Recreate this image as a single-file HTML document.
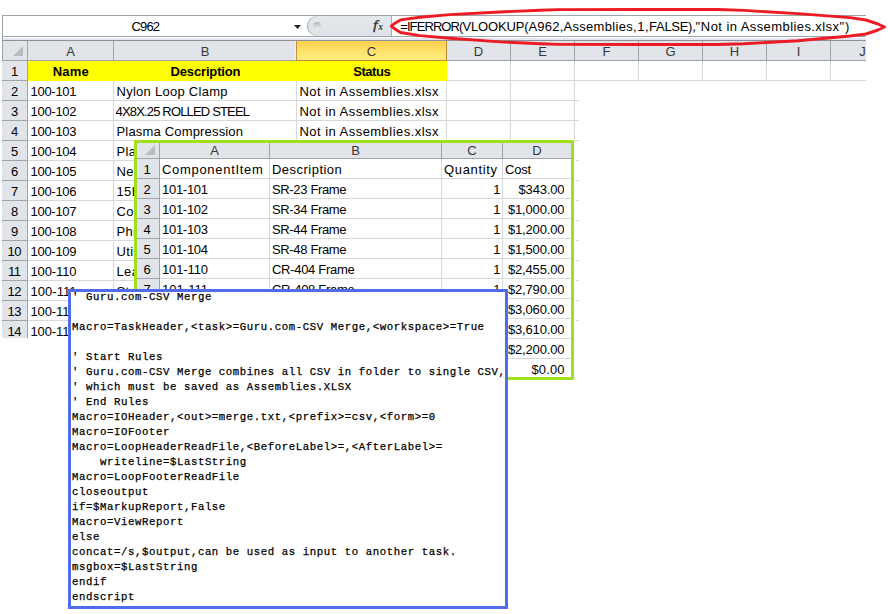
<!DOCTYPE html>
<html><head><meta charset="utf-8"><title>Excel VLOOKUP Assemblies</title>
<style>
html,body{margin:0;padding:0;background:#fff;}
body{width:888px;height:614px;position:relative;overflow:hidden;font-family:"Liberation Sans",sans-serif;font-size:13px;color:#000;}
body>div,body>svg,body>pre{position:absolute;}
.t{white-space:nowrap;overflow:hidden;}
.c{text-align:center;}
.r{text-align:right;}
.b{font-weight:bold;}
.h{color:#383838;}
.f{overflow:visible;font-size:0;}
.f span{display:inline-block;font-size:13px;white-space:pre;vertical-align:top;}
.fx{font-family:"Liberation Serif",serif;font-style:italic;font-weight:bold;font-size:14px;color:#333;}
.fx b{display:inline-block;font-weight:normal;font-size:13.5px;-webkit-text-stroke:0.3px #333;transform:scaleX(1.2);transform-origin:0 50%;margin-right:1.5px;}
.fx span{font-size:9.5px;position:relative;top:0.5px;}
.code{margin:0;font-family:"Liberation Mono",monospace;font-size:10.7px;letter-spacing:0.58px;line-height:15px;color:#000;-webkit-text-stroke:0.25px #000;}
</style></head><body>
<div style="left:2px;top:15px;width:864px;height:1px;background:#9fa4aa;"></div>
<div style="left:2px;top:15px;width:1px;height:46px;background:#9fa4aa;"></div>
<div style="left:2px;top:36px;width:864px;height:1px;background:#9fa4aa;"></div>
<div style="left:3px;top:37px;width:863px;height:1px;background:#ffffff;"></div>
<div style="left:3px;top:38px;width:863px;height:2px;background:#e3e8f4;"></div>
<div style="left:2px;top:40px;width:864px;height:1px;background:#8e9298;"></div>
<div class="t c" style="left:2px;top:17px;width:286.67px;height:20px;line-height:20px;letter-spacing:-0.826px;">C962</div>
<svg style="left:294px;top:25px" width="8" height="5" viewBox="0 0 8 5"><path d="M0 0H7L3.5 4Z" fill="#222"/></svg>
<div style="left:307px;top:16px;width:84px;height:20px;background:linear-gradient(#e4e7eb,#dfe2e7);border-radius:10px 0 0 10px;box-shadow:inset 1px 0 0 #a9adb3;"></div>
<div style="left:391px;top:16px;width:1px;height:20px;background:#a9adb3;"></div>
<div style="left:312.5px;top:21.5px;width:8.5px;height:8.5px;border-radius:50%;background:linear-gradient(#b3b6bb,#d6d8db 55%,#f0f1f2);"></div>
<div class="t fx" style="left:373px;top:15px;width:18px;height:20px;line-height:20px;"><b>f</b><span>x</span></div>
<div class="t f" style="left:400.2px;top:17px;width:470px;height:20px;line-height:20px;"><span style="width:62.3px;letter-spacing:-0.902px;">=IFERROR(</span><span style="width:66.0px;letter-spacing:-0.148px;">VLOOKUP(</span><span style="width:35.0px;letter-spacing:0.203px;">A962,</span><span style="width:69.5px;letter-spacing:0.303px;">Assemblies</span><span style="width:16.1px;letter-spacing:0.544px;">,1,</span><span style="width:46.4px;letter-spacing:-0.289px;">FALSE),</span><span style="width:5.4px;letter-spacing:0.775px;">"</span><span style="width:138.6px;letter-spacing:0.421px;">Not in Assemblies.xlsx</span><span style="width:11.0px;letter-spacing:1.023px;">")</span></div>
<div style="left:3px;top:41px;width:863px;height:19px;background:#e1e4e9;"></div>
<div style="left:2px;top:60px;width:864px;height:1px;background:#9fa4aa;"></div>
<div style="left:296px;top:41px;width:151px;height:20px;background:#c48d33;"></div>
<div style="left:297px;top:41px;width:149px;height:19px;background:linear-gradient(#fccf50,#ffe36c 55%,#ffee80);"></div>
<div style="left:295px;top:41px;width:1px;height:19px;background:#eef0f3;"></div>
<div style="left:27px;top:41px;width:1px;height:297px;background:#9fa4aa;"></div>
<div style="left:113px;top:41px;width:1px;height:19px;background:#9fa4aa;"></div>
<div class="t c h" style="left:28px;top:42px;width:85.00px;height:19px;line-height:19px;">A</div>
<div class="t c h" style="left:114px;top:42px;width:182.00px;height:19px;line-height:19px;">B</div>
<div class="t c h" style="left:297px;top:42px;width:149.00px;height:19px;line-height:19px;">C</div>
<div style="left:510px;top:41px;width:1px;height:19px;background:#9fa4aa;"></div>
<div class="t c h" style="left:447px;top:42px;width:63.00px;height:19px;line-height:19px;">D</div>
<div style="left:574px;top:41px;width:1px;height:19px;background:#9fa4aa;"></div>
<div class="t c h" style="left:511px;top:42px;width:63.00px;height:19px;line-height:19px;">E</div>
<div style="left:638px;top:41px;width:1px;height:19px;background:#9fa4aa;"></div>
<div class="t c h" style="left:575px;top:42px;width:63.00px;height:19px;line-height:19px;">F</div>
<div style="left:702px;top:41px;width:1px;height:19px;background:#9fa4aa;"></div>
<div class="t c h" style="left:639px;top:42px;width:63.00px;height:19px;line-height:19px;">G</div>
<div style="left:766px;top:41px;width:1px;height:19px;background:#9fa4aa;"></div>
<div class="t c h" style="left:703px;top:42px;width:63.00px;height:19px;line-height:19px;">H</div>
<div style="left:830px;top:41px;width:1px;height:19px;background:#9fa4aa;"></div>
<div class="t c h" style="left:767px;top:42px;width:63.00px;height:19px;line-height:19px;">I</div>
<div class="t c h" style="left:831px;top:42px;width:63.00px;height:19px;line-height:19px;">J</div>
<svg style="left:12px;top:45px" width="12" height="12" viewBox="0 0 12 12"><path d="M11 1V11H1Z" fill="#b9bdc2"/></svg>
<div style="left:2px;top:61px;width:25px;height:277px;background:#e1e4e9;"></div>
<div style="left:2px;top:80px;width:25px;height:1px;background:#9fa4aa;"></div>
<div class="t c" style="left:2px;top:62px;width:24.70px;height:19px;line-height:19px;letter-spacing:-0.3px;">1</div>
<div style="left:2px;top:100px;width:25px;height:1px;background:#9fa4aa;"></div>
<div class="t c" style="left:2px;top:82px;width:24.70px;height:19px;line-height:19px;letter-spacing:-0.3px;">2</div>
<div style="left:2px;top:120px;width:25px;height:1px;background:#9fa4aa;"></div>
<div class="t c" style="left:2px;top:102px;width:24.70px;height:19px;line-height:19px;letter-spacing:-0.3px;">3</div>
<div style="left:2px;top:140px;width:25px;height:1px;background:#9fa4aa;"></div>
<div class="t c" style="left:2px;top:122px;width:24.70px;height:19px;line-height:19px;letter-spacing:-0.3px;">4</div>
<div style="left:2px;top:160px;width:25px;height:1px;background:#9fa4aa;"></div>
<div class="t c" style="left:2px;top:142px;width:24.70px;height:19px;line-height:19px;letter-spacing:-0.3px;">5</div>
<div style="left:2px;top:180px;width:25px;height:1px;background:#9fa4aa;"></div>
<div class="t c" style="left:2px;top:162px;width:24.70px;height:19px;line-height:19px;letter-spacing:-0.3px;">6</div>
<div style="left:2px;top:200px;width:25px;height:1px;background:#9fa4aa;"></div>
<div class="t c" style="left:2px;top:182px;width:24.70px;height:19px;line-height:19px;letter-spacing:-0.3px;">7</div>
<div style="left:2px;top:220px;width:25px;height:1px;background:#9fa4aa;"></div>
<div class="t c" style="left:2px;top:202px;width:24.70px;height:19px;line-height:19px;letter-spacing:-0.3px;">8</div>
<div style="left:2px;top:240px;width:25px;height:1px;background:#9fa4aa;"></div>
<div class="t c" style="left:2px;top:222px;width:24.70px;height:19px;line-height:19px;letter-spacing:-0.3px;">9</div>
<div style="left:2px;top:260px;width:25px;height:1px;background:#9fa4aa;"></div>
<div class="t c" style="left:2px;top:242px;width:24.70px;height:19px;line-height:19px;letter-spacing:-0.3px;">10</div>
<div style="left:2px;top:280px;width:25px;height:1px;background:#9fa4aa;"></div>
<div class="t c" style="left:2px;top:262px;width:24.70px;height:19px;line-height:19px;letter-spacing:-0.3px;">11</div>
<div style="left:2px;top:300px;width:25px;height:1px;background:#9fa4aa;"></div>
<div class="t c" style="left:2px;top:282px;width:24.70px;height:19px;line-height:19px;letter-spacing:-0.3px;">12</div>
<div style="left:2px;top:320px;width:25px;height:1px;background:#9fa4aa;"></div>
<div class="t c" style="left:2px;top:302px;width:24.70px;height:19px;line-height:19px;letter-spacing:-0.3px;">13</div>
<div class="t c" style="left:2px;top:322px;width:24.70px;height:19px;line-height:19px;letter-spacing:-0.3px;">14</div>
<div style="left:28px;top:61px;width:419px;height:20px;background:#ffff00;"></div>
<div style="left:447px;top:80px;width:419px;height:1px;background:#d6d8da;"></div>
<div style="left:510px;top:61px;width:1px;height:20px;background:#d6d8da;"></div>
<div style="left:574px;top:61px;width:1px;height:20px;background:#d6d8da;"></div>
<div style="left:638px;top:61px;width:1px;height:20px;background:#d6d8da;"></div>
<div style="left:702px;top:61px;width:1px;height:20px;background:#d6d8da;"></div>
<div style="left:766px;top:61px;width:1px;height:20px;background:#d6d8da;"></div>
<div style="left:830px;top:61px;width:1px;height:20px;background:#d6d8da;"></div>
<div style="left:28px;top:100px;width:551px;height:1px;background:#d6d8da;"></div>
<div style="left:28px;top:120px;width:551px;height:1px;background:#d6d8da;"></div>
<div style="left:28px;top:140px;width:551px;height:1px;background:#d6d8da;"></div>
<div style="left:28px;top:160px;width:551px;height:1px;background:#d6d8da;"></div>
<div style="left:28px;top:180px;width:551px;height:1px;background:#d6d8da;"></div>
<div style="left:28px;top:200px;width:551px;height:1px;background:#d6d8da;"></div>
<div style="left:28px;top:220px;width:551px;height:1px;background:#d6d8da;"></div>
<div style="left:28px;top:240px;width:551px;height:1px;background:#d6d8da;"></div>
<div style="left:28px;top:260px;width:551px;height:1px;background:#d6d8da;"></div>
<div style="left:28px;top:280px;width:551px;height:1px;background:#d6d8da;"></div>
<div style="left:28px;top:300px;width:551px;height:1px;background:#d6d8da;"></div>
<div style="left:28px;top:320px;width:551px;height:1px;background:#d6d8da;"></div>
<div style="left:113px;top:81px;width:1px;height:257px;background:#d6d8da;"></div>
<div style="left:296px;top:81px;width:1px;height:257px;background:#d6d8da;"></div>
<div style="left:446px;top:81px;width:1px;height:257px;background:#d6d8da;"></div>
<div style="left:510px;top:81px;width:1px;height:257px;background:#d6d8da;"></div>
<div style="left:574px;top:81px;width:1px;height:257px;background:#d6d8da;"></div>
<div class="t c b" style="left:28px;top:62px;width:85.63px;height:20px;line-height:20px;letter-spacing:0.126px;">Name</div>
<div class="t c b" style="left:114px;top:62px;width:182.85px;height:20px;line-height:20px;letter-spacing:-0.152px;">Description</div>
<div class="t c b" style="left:297px;top:62px;width:149.53px;height:20px;line-height:20px;letter-spacing:-0.467px;">Status</div>
<div class="t " style="left:30.5px;top:82px;width:82.00px;height:20px;line-height:20px;letter-spacing:-0.286px;">100-101</div>
<div class="t " style="left:116.5px;top:82px;width:179.00px;height:20px;line-height:20px;letter-spacing:0.27px;">Nylon Loop Clamp</div>
<div class="t " style="left:299.5px;top:82px;width:146.00px;height:20px;line-height:20px;letter-spacing:0.461px;">Not in Assemblies.xlsx</div>
<div class="t " style="left:30.5px;top:102px;width:82.00px;height:20px;line-height:20px;letter-spacing:-0.286px;">100-102</div>
<div class="t " style="left:115.5px;top:102px;width:179.00px;height:20px;line-height:20px;letter-spacing:-0.832px;">4X8X.25 ROLLED STEEL</div>
<div class="t " style="left:299.5px;top:102px;width:146.00px;height:20px;line-height:20px;letter-spacing:0.461px;">Not in Assemblies.xlsx</div>
<div class="t " style="left:30.5px;top:122px;width:82.00px;height:20px;line-height:20px;letter-spacing:-0.286px;">100-103</div>
<div class="t " style="left:116.5px;top:122px;width:179.00px;height:20px;line-height:20px;letter-spacing:0.174px;">Plasma Compression</div>
<div class="t " style="left:299.5px;top:122px;width:146.00px;height:20px;line-height:20px;letter-spacing:0.461px;">Not in Assemblies.xlsx</div>
<div class="t " style="left:30.5px;top:142px;width:82.00px;height:20px;line-height:20px;letter-spacing:-0.286px;">100-104</div>
<div class="t " style="left:116.5px;top:142px;width:179.00px;height:20px;line-height:20px;letter-spacing:0.35px;">Plasma Cutter</div>
<div class="t " style="left:30.5px;top:162px;width:82.00px;height:20px;line-height:20px;letter-spacing:-0.286px;">100-105</div>
<div class="t " style="left:116.5px;top:162px;width:179.00px;height:20px;line-height:20px;letter-spacing:0.35px;">Neoprene Gasket</div>
<div class="t " style="left:30.5px;top:182px;width:82.00px;height:20px;line-height:20px;letter-spacing:-0.286px;">100-106</div>
<div class="t " style="left:116.5px;top:182px;width:179.00px;height:20px;line-height:20px;letter-spacing:0.35px;">15HP Motor</div>
<div class="t " style="left:30.5px;top:202px;width:82.00px;height:20px;line-height:20px;letter-spacing:-0.286px;">100-107</div>
<div class="t " style="left:116.5px;top:202px;width:179.00px;height:20px;line-height:20px;letter-spacing:0.35px;">Cooling Fan</div>
<div class="t " style="left:30.5px;top:222px;width:82.00px;height:20px;line-height:20px;letter-spacing:-0.286px;">100-108</div>
<div class="t " style="left:116.5px;top:222px;width:179.00px;height:20px;line-height:20px;letter-spacing:0.35px;">Phillips Screw</div>
<div class="t " style="left:30.5px;top:242px;width:82.00px;height:20px;line-height:20px;letter-spacing:-0.286px;">100-109</div>
<div class="t " style="left:116.5px;top:242px;width:179.00px;height:20px;line-height:20px;letter-spacing:0.35px;">Utility Box</div>
<div class="t " style="left:30.5px;top:262px;width:82.00px;height:20px;line-height:20px;letter-spacing:-0.125px;">100-110</div>
<div class="t " style="left:116.5px;top:262px;width:179.00px;height:20px;line-height:20px;letter-spacing:0.35px;">Lead Wire</div>
<div class="t " style="left:30.5px;top:282px;width:82.00px;height:20px;line-height:20px;letter-spacing:0.036px;">100-111</div>
<div class="t " style="left:116.5px;top:282px;width:179.00px;height:20px;line-height:20px;letter-spacing:0.35px;">Stainless Bolt</div>
<div class="t " style="left:30.5px;top:302px;width:82.00px;height:20px;line-height:20px;letter-spacing:-0.125px;">100-112</div>
<div class="t " style="left:116.5px;top:302px;width:179.00px;height:20px;line-height:20px;letter-spacing:0.35px;">Steel Plate</div>
<div class="t " style="left:30.5px;top:322px;width:82.00px;height:20px;line-height:20px;letter-spacing:-0.125px;">100-113</div>
<div class="t " style="left:116.5px;top:322px;width:179.00px;height:20px;line-height:20px;letter-spacing:0.35px;">Steel Rod</div>
<div style="left:574px;top:140px;width:2px;height:198px;background:#ffffff;"></div>
<div style="left:0px;top:338px;width:600px;height:40px;background:#ffffff;"></div>
<div style="left:134px;top:140px;width:434px;height:234px;border:3px solid #a2e01c;background:#fff;"></div>
<div style="left:137px;top:143px;width:434px;height:15px;background:#e1e4e9;"></div>
<div style="left:137px;top:158px;width:434px;height:1px;background:#9fa4aa;"></div>
<div style="left:159px;top:143px;width:1px;height:234px;background:#9fa4aa;"></div>
<div style="left:269px;top:143px;width:1px;height:15px;background:#9fa4aa;"></div>
<div style="left:269px;top:159px;width:1px;height:218px;background:#d6d8da;"></div>
<div class="t c h" style="left:160px;top:141px;width:109.00px;height:19px;line-height:19px;">A</div>
<div style="left:441px;top:143px;width:1px;height:15px;background:#9fa4aa;"></div>
<div style="left:441px;top:159px;width:1px;height:218px;background:#d6d8da;"></div>
<div class="t c h" style="left:270px;top:141px;width:171.00px;height:19px;line-height:19px;">B</div>
<div style="left:502px;top:143px;width:1px;height:15px;background:#9fa4aa;"></div>
<div style="left:502px;top:159px;width:1px;height:218px;background:#d6d8da;"></div>
<div class="t c h" style="left:442px;top:141px;width:60.00px;height:19px;line-height:19px;">C</div>
<div class="t c h" style="left:503px;top:141px;width:68.00px;height:19px;line-height:19px;">D</div>
<svg style="left:144px;top:144px" width="12" height="12" viewBox="0 0 12 12"><path d="M11 1V11H1Z" fill="#b9bdc2"/></svg>
<div style="left:137px;top:159px;width:22px;height:218px;background:#e1e4e9;"></div>
<div style="left:137px;top:178px;width:22px;height:1px;background:#9fa4aa;"></div>
<div style="left:160px;top:178px;width:411px;height:1px;background:#d6d8da;"></div>
<div class="t c" style="left:136px;top:160px;width:21.70px;height:20px;line-height:20px;letter-spacing:-0.3px;">1</div>
<div class="t " style="left:162px;top:160px;width:106.00px;height:20px;line-height:20px;letter-spacing:0.692px;">ComponentItem</div>
<div class="t " style="left:272px;top:160px;width:168.00px;height:20px;line-height:20px;letter-spacing:0.477px;">Description</div>
<div class="t " style="left:444px;top:160px;width:58.00px;height:20px;line-height:20px;letter-spacing:0.654px;">Quantity</div>
<div class="t " style="left:505px;top:160px;width:64.00px;height:20px;line-height:20px;letter-spacing:-0.245px;">Cost</div>
<div style="left:137px;top:198px;width:22px;height:1px;background:#9fa4aa;"></div>
<div style="left:160px;top:198px;width:411px;height:1px;background:#d6d8da;"></div>
<div class="t c" style="left:136px;top:180px;width:21.70px;height:20px;line-height:20px;letter-spacing:-0.3px;">2</div>
<div class="t " style="left:162px;top:180px;width:106.00px;height:20px;line-height:20px;letter-spacing:-0.286px;">101-101</div>
<div class="t " style="left:272px;top:180px;width:168.00px;height:20px;line-height:20px;letter-spacing:-0.343px;">SR-23 Frame</div>
<div class="t r" style="left:442px;top:180px;width:58.50px;height:20px;line-height:20px;">1</div>
<div class="t r" style="left:503px;top:180px;width:61.33px;height:20px;line-height:20px;letter-spacing:-0.167px;">$343.00</div>
<div style="left:137px;top:218px;width:22px;height:1px;background:#9fa4aa;"></div>
<div style="left:160px;top:218px;width:411px;height:1px;background:#d6d8da;"></div>
<div class="t c" style="left:136px;top:200px;width:21.70px;height:20px;line-height:20px;letter-spacing:-0.3px;">3</div>
<div class="t " style="left:162px;top:200px;width:106.00px;height:20px;line-height:20px;letter-spacing:-0.286px;">101-102</div>
<div class="t " style="left:272px;top:200px;width:168.00px;height:20px;line-height:20px;letter-spacing:-0.343px;">SR-34 Frame</div>
<div class="t r" style="left:442px;top:200px;width:58.50px;height:20px;line-height:20px;">1</div>
<div class="t r" style="left:503px;top:200px;width:61.34px;height:20px;line-height:20px;letter-spacing:-0.155px;">$1,000.00</div>
<div style="left:137px;top:238px;width:22px;height:1px;background:#9fa4aa;"></div>
<div style="left:160px;top:238px;width:411px;height:1px;background:#d6d8da;"></div>
<div class="t c" style="left:136px;top:220px;width:21.70px;height:20px;line-height:20px;letter-spacing:-0.3px;">4</div>
<div class="t " style="left:162px;top:220px;width:106.00px;height:20px;line-height:20px;letter-spacing:-0.286px;">101-103</div>
<div class="t " style="left:272px;top:220px;width:168.00px;height:20px;line-height:20px;letter-spacing:-0.343px;">SR-44 Frame</div>
<div class="t r" style="left:442px;top:220px;width:58.50px;height:20px;line-height:20px;">1</div>
<div class="t r" style="left:503px;top:220px;width:61.34px;height:20px;line-height:20px;letter-spacing:-0.155px;">$1,200.00</div>
<div style="left:137px;top:258px;width:22px;height:1px;background:#9fa4aa;"></div>
<div style="left:160px;top:258px;width:411px;height:1px;background:#d6d8da;"></div>
<div class="t c" style="left:136px;top:240px;width:21.70px;height:20px;line-height:20px;letter-spacing:-0.3px;">5</div>
<div class="t " style="left:162px;top:240px;width:106.00px;height:20px;line-height:20px;letter-spacing:-0.286px;">101-104</div>
<div class="t " style="left:272px;top:240px;width:168.00px;height:20px;line-height:20px;letter-spacing:-0.343px;">SR-48 Frame</div>
<div class="t r" style="left:442px;top:240px;width:58.50px;height:20px;line-height:20px;">1</div>
<div class="t r" style="left:503px;top:240px;width:61.34px;height:20px;line-height:20px;letter-spacing:-0.155px;">$1,500.00</div>
<div style="left:137px;top:278px;width:22px;height:1px;background:#9fa4aa;"></div>
<div style="left:160px;top:278px;width:411px;height:1px;background:#d6d8da;"></div>
<div class="t c" style="left:136px;top:260px;width:21.70px;height:20px;line-height:20px;letter-spacing:-0.3px;">6</div>
<div class="t " style="left:162px;top:260px;width:106.00px;height:20px;line-height:20px;letter-spacing:-0.125px;">101-110</div>
<div class="t " style="left:272px;top:260px;width:168.00px;height:20px;line-height:20px;letter-spacing:-0.297px;">CR-404 Frame</div>
<div class="t r" style="left:442px;top:260px;width:58.50px;height:20px;line-height:20px;">1</div>
<div class="t r" style="left:503px;top:260px;width:61.34px;height:20px;line-height:20px;letter-spacing:-0.155px;">$2,455.00</div>
<div style="left:137px;top:298px;width:22px;height:1px;background:#9fa4aa;"></div>
<div style="left:160px;top:298px;width:411px;height:1px;background:#d6d8da;"></div>
<div class="t c" style="left:136px;top:280px;width:21.70px;height:20px;line-height:20px;letter-spacing:-0.3px;">7</div>
<div class="t " style="left:162px;top:280px;width:106.00px;height:20px;line-height:20px;letter-spacing:0.036px;">101-111</div>
<div class="t " style="left:272px;top:280px;width:168.00px;height:20px;line-height:20px;letter-spacing:-0.297px;">CR-408 Frame</div>
<div class="t r" style="left:442px;top:280px;width:58.50px;height:20px;line-height:20px;">1</div>
<div class="t r" style="left:503px;top:280px;width:61.34px;height:20px;line-height:20px;letter-spacing:-0.155px;">$2,790.00</div>
<div style="left:137px;top:318px;width:22px;height:1px;background:#9fa4aa;"></div>
<div style="left:160px;top:318px;width:411px;height:1px;background:#d6d8da;"></div>
<div class="t c" style="left:136px;top:300px;width:21.70px;height:20px;line-height:20px;letter-spacing:-0.3px;">8</div>
<div class="t " style="left:162px;top:300px;width:106.00px;height:20px;line-height:20px;letter-spacing:-0.125px;">101-112</div>
<div class="t " style="left:272px;top:300px;width:168.00px;height:20px;line-height:20px;letter-spacing:-0.297px;">CR-410 Frame</div>
<div class="t r" style="left:442px;top:300px;width:58.50px;height:20px;line-height:20px;">1</div>
<div class="t r" style="left:503px;top:300px;width:61.34px;height:20px;line-height:20px;letter-spacing:-0.155px;">$3,060.00</div>
<div style="left:137px;top:338px;width:22px;height:1px;background:#9fa4aa;"></div>
<div style="left:160px;top:338px;width:411px;height:1px;background:#d6d8da;"></div>
<div class="t c" style="left:136px;top:320px;width:21.70px;height:20px;line-height:20px;letter-spacing:-0.3px;">9</div>
<div class="t " style="left:162px;top:320px;width:106.00px;height:20px;line-height:20px;letter-spacing:-0.125px;">101-113</div>
<div class="t " style="left:272px;top:320px;width:168.00px;height:20px;line-height:20px;letter-spacing:-0.297px;">CR-412 Frame</div>
<div class="t r" style="left:442px;top:320px;width:58.50px;height:20px;line-height:20px;">1</div>
<div class="t r" style="left:503px;top:320px;width:61.34px;height:20px;line-height:20px;letter-spacing:-0.155px;">$3,610.00</div>
<div style="left:137px;top:358px;width:22px;height:1px;background:#9fa4aa;"></div>
<div style="left:160px;top:358px;width:411px;height:1px;background:#d6d8da;"></div>
<div class="t c" style="left:136px;top:340px;width:21.70px;height:20px;line-height:20px;letter-spacing:-0.3px;">10</div>
<div class="t " style="left:162px;top:340px;width:106.00px;height:20px;line-height:20px;letter-spacing:-0.125px;">101-114</div>
<div class="t " style="left:272px;top:340px;width:168.00px;height:20px;line-height:20px;letter-spacing:-0.297px;">CR-414 Frame</div>
<div class="t r" style="left:442px;top:340px;width:58.50px;height:20px;line-height:20px;">1</div>
<div class="t r" style="left:503px;top:340px;width:61.34px;height:20px;line-height:20px;letter-spacing:-0.155px;">$2,200.00</div>
<div class="t c" style="left:136px;top:360px;width:21.70px;height:20px;line-height:20px;letter-spacing:-0.3px;">11</div>
<div class="t " style="left:162px;top:360px;width:106.00px;height:20px;line-height:20px;letter-spacing:-0.125px;">101-115</div>
<div class="t " style="left:272px;top:360px;width:168.00px;height:20px;line-height:20px;letter-spacing:-0.297px;">CR-416 Frame</div>
<div class="t r" style="left:442px;top:360px;width:58.50px;height:20px;line-height:20px;">1</div>
<div class="t r" style="left:503px;top:360px;width:61.61px;height:20px;line-height:20px;letter-spacing:0.113px;">$0.00</div>
<div style="left:68px;top:289px;width:434px;height:314px;border:3px solid #4f6dea;background:#fff;"></div>
<pre class="code" style="left:72px;top:290px;">' Guru.com-CSV Merge

Macro=TaskHeader,&lt;task&gt;=Guru.com-CSV Merge,&lt;workspace&gt;=True

' Start Rules
' Guru.com-CSV Merge combines all CSV in folder to single CSV,
' which must be saved as Assemblies.XLSX
' End Rules
Macro=IOHeader,&lt;out&gt;=merge.txt,&lt;prefix&gt;=csv,&lt;form&gt;=0
Macro=IOFooter
Macro=LoopHeaderReadFile,&lt;BeforeLabel&gt;=,&lt;AfterLabel&gt;=
    writeline=$LastString
Macro=LoopFooterReadFile
closeoutput
if=$MarkupReport,False
Macro=ViewReport
else
concat=/s,$output,can be used as input to another task.
msgbox=$LastString
endif
endscript</pre>
<svg style="left:380px;top:0" width="508" height="56" viewBox="380 0 508 56"><path d="M391.3,26.1 L395,23.2 L400.5,19.9 L420,17.2 L450,14.6 L500,12 L540,10.3 L558,9.6 L640,9.5 L718,9.5 L744,10.4 L798,13.6 L850,17.6 L866,20 L878,24 L884.5,27 L878,30 L866,34 L850,36 L798,40.8 L744,43.7 L718,44.5 L640,44.5 L558,44.4 L540,43.7 L500,41.9 L450,38.3 L420,35.6 L400.5,32.5 L395,29 Z" fill="none" stroke="#ed1c24" stroke-width="2.9" stroke-linejoin="round"/></svg>
</body></html>
